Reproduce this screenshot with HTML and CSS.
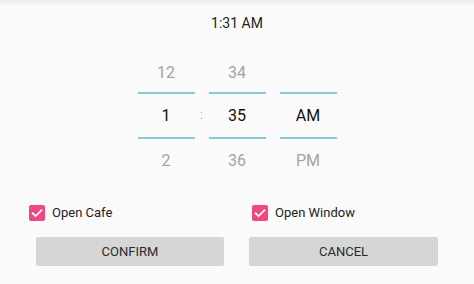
FILE: index.html
```html
<!DOCTYPE html>
<html>
<head>
<meta charset="utf-8">
<link rel="stylesheet" href="styles.css">
</head>
<body>
<div class="shadow"></div>
<div class="title">1:31 AM</div>
<div class="picker">
  <div class="col">
    <div class="cell cell-top dim">12</div>
    <div class="line"></div>
    <div class="cell cell-mid">1</div>
    <div class="line"></div>
    <div class="cell cell-bot dim">2</div>
  </div>
  <div class="colon">:</div>
  <div class="col">
    <div class="cell cell-top dim">34</div>
    <div class="line"></div>
    <div class="cell cell-mid">35</div>
    <div class="line"></div>
    <div class="cell cell-bot dim">36</div>
  </div>
  <div class="spacer"></div>
  <div class="col">
    <div class="cell cell-top dim"></div>
    <div class="line"></div>
    <div class="cell cell-mid">AM</div>
    <div class="line"></div>
    <div class="cell cell-bot dim">PM</div>
  </div>
</div>
<div class="bottom">
  <div class="half half-left">
    <label class="check">
      <span class="box"><svg width="16" height="16" viewBox="0 0 16 16"><path d="M3.6 8.2 L6.6 11.1 L12.4 5.2" fill="none" stroke="#fff" stroke-width="1.8" stroke-linecap="square"/></svg></span>
      <span class="check-label">Open Cafe</span>
    </label>
    <div class="btn">CONFIRM</div>
  </div>
  <div class="half half-right">
    <label class="check">
      <span class="box"><svg width="16" height="16" viewBox="0 0 16 16"><path d="M3.6 8.2 L6.6 11.1 L12.4 5.2" fill="none" stroke="#fff" stroke-width="1.8" stroke-linecap="square"/></svg></span>
      <span class="check-label">Open Window</span>
    </label>
    <div class="btn">CANCEL</div>
  </div>
</div>
</body>
</html>
```
FILE: styles.css
```css
html, body {
  margin: 0;
  padding: 0;
  background: #fafafa;
  width: 474px;
  height: 284px;
  overflow: hidden;
  font-family: Roboto, "Noto Sans", sans-serif;
}
.shadow {
  height: 6px;
  background: linear-gradient(#ececec, #fafafa);
}
.title {
  height: 34px;
  line-height: 34px;
  margin-top: 0;
  text-align: center;
  font-size: 14px;
  color: #222;
}
.picker {
  display: flex;
  justify-content: center;
  margin-top: 12px;
}
.col {
  width: 57px;
  display: flex;
  flex-direction: column;
}
.cell {
  display: flex;
  align-items: center;
  justify-content: center;
  font-size: 16px;
  color: #111;
}
.cell-top { height: 40px; }
.cell-mid { height: 43px; }
.cell-bot { height: 42px; }
.dim { color: #a3a3a3; }
.line {
  height: 2px;
  background: #8acbdb;
}
.colon {
  width: 14px;
  display: flex;
  align-items: center;
  justify-content: center;
  height: 130px;
  padding-bottom: 4px;
  box-sizing: border-box;
  font-size: 12px;
  color: #b5b5b5;
}
.spacer { width: 14px; }
.bottom {
  display: flex;
  margin-top: 22px;
}
.half {
  width: 237px;
  display: flex;
  flex-direction: column;
}
.check {
  display: flex;
  align-items: center;
  height: 17px;
}
.box {
  width: 16px;
  height: 16px;
  border-radius: 2px;
  background: #ef4780;
  display: block;
}
.box svg { display: block; }
.check-label {
  font-size: 13px;
  color: #222;
  margin-left: 7px;
}
.half-left .check { margin-left: 29px; }
.half-right .check { margin-left: 15px; }
.btn {
  margin-top: 16px;
  height: 29px;
  background: #d6d6d6;
  border-radius: 2px;
  display: flex;
  align-items: center;
  justify-content: center;
  font-size: 13px;
  color: #2a2a2a;
}
.half-left .btn { margin-left: 36px; width: 188px; }
.half-right .btn { margin-left: 12px; width: 189px; }
```
